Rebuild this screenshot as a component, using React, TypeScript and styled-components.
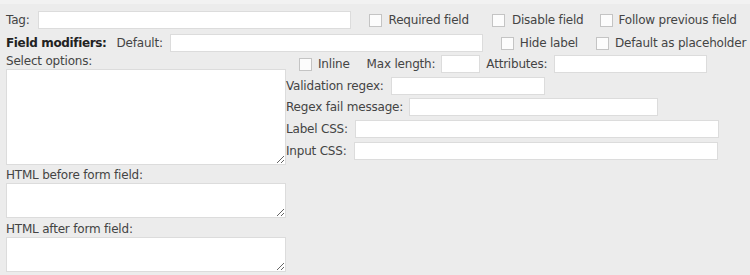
import React from "react";
import styled, { createGlobalStyle } from "styled-components";

const Global = createGlobalStyle`
  html, body { margin: 0; padding: 0; background: #ececec; }
  body {
    font-family: "DejaVu Sans", Verdana, sans-serif;
    font-size: 12px;
    letter-spacing: -0.2px;
    color: #444;
  }
  * { box-sizing: border-box; }
`;

const Panel = styled.div`
  width: 750px;
  height: 275px;
  background: #ececec;
  border-top: 4px solid #f2f2f2;
  padding: 7px 6px 0 6px;
  overflow: hidden;
`;

const Row = styled.div<{ $mb?: number }>`
  display: flex;
  align-items: center;
  height: 18px;
  margin-bottom: ${(p) => p.$mb ?? 5}px;
  white-space: nowrap;
`;

const Label = styled.span<{ $ml?: number; $bold?: boolean }>`
  margin-left: ${(p) => p.$ml ?? 0}px;
  font-weight: ${(p) => (p.$bold ? "bold" : "normal")};
  letter-spacing: ${(p) => (p.$bold ? "-0.35px" : "-0.2px")};
  color: ${(p) => (p.$bold ? "#222" : "#444")};
  line-height: 18px;
`;

const TextInput = styled.input<{ $w: number; $ml?: number }>`
  width: ${(p) => p.$w}px;
  height: 18px;
  margin: 0 0 0 ${(p) => p.$ml ?? 6}px;
  padding: 0 3px;
  border: 1px solid #dcdcdc;
  background: #fff;
  font: inherit;
  outline: none;
  flex: none;
`;

const Box = styled.span<{ $ml: number }>`
  display: inline-block;
  width: 13px;
  height: 13px;
  margin-left: ${(p) => p.$ml}px;
  border: 1px solid #c4c4c4;
  background: #fcfcfc;
  flex: none;
`;

const Main = styled.div`
  display: flex;
  align-items: flex-start;
`;

const LeftCol = styled.div`
  width: 280px;
  display: flex;
  flex-direction: column;
  flex: none;
`;

const RightCol = styled.div`
  display: flex;
  flex-direction: column;
`;

const ColLabel = styled.div<{ $mt?: number }>`
  line-height: 12px;
  height: 12px;
  margin-top: ${(p) => p.$mt ?? 0}px;
  margin-bottom: 2px;
`;

const Area = styled.textarea<{ $h: number }>`
  width: 280px;
  height: ${(p) => p.$h}px;
  margin: 0;
  border: 1px solid #dcdcdc;
  background: #fff;
  font: inherit;
  outline: none;
  display: block;
`;

const Check = ({ ml, label, gap = 6 }: { ml: number; label: string; gap?: number }) => (
  <>
    <Box $ml={ml} />
    <Label $ml={gap}>{label}</Label>
  </>
);

export default function App() {
  return (
    <>
      <Global />
      <Panel>
        <Row>
          <Label>Tag:</Label>
          <TextInput $w={313} $ml={8} />
          <Check ml={18} label="Required field" gap={7} />
          <Check ml={23} label="Disable field" gap={7} />
          <Check ml={16} label="Follow previous field" gap={6} />
        </Row>
        <Row $mb={3}>
          <Label $bold>Field modifiers:</Label>
          <Label $ml={10}>Default:</Label>
          <TextInput $w={313} $ml={7} />
          <Check ml={18} label="Hide label" />
          <Check ml={18} label="Default as placeholder" />
        </Row>
        <Main>
          <LeftCol>
            <ColLabel>Select options:</ColLabel>
            <Area $h={96} />
            <ColLabel $mt={4}>HTML before form field:</ColLabel>
            <Area $h={35} />
            <ColLabel $mt={5}>HTML after form field:</ColLabel>
            <Area $h={35} />
          </LeftCol>
          <RightCol>
            <Row $mb={4}>
              <Check ml={13} label="Inline" />
              <Label $ml={17}>Max length:</Label>
              <TextInput $w={39} $ml={6} />
              <Label $ml={6}>Attributes:</Label>
              <TextInput $w={153} $ml={7} />
            </Row>
            <Row $mb={3}>
              <Label>Validation regex:</Label>
              <TextInput $w={154} $ml={7} />
            </Row>
            <Row $mb={4}>
              <Label>Regex fail message:</Label>
              <TextInput $w={249} $ml={6} />
            </Row>
            <Row $mb={4}>
              <Label>Label CSS:</Label>
              <TextInput $w={364} $ml={7} />
            </Row>
            <Row $mb={0}>
              <Label>Input CSS:</Label>
              <TextInput $w={364} $ml={7} />
            </Row>
          </RightCol>
        </Main>
      </Panel>
    </>
  );
}
